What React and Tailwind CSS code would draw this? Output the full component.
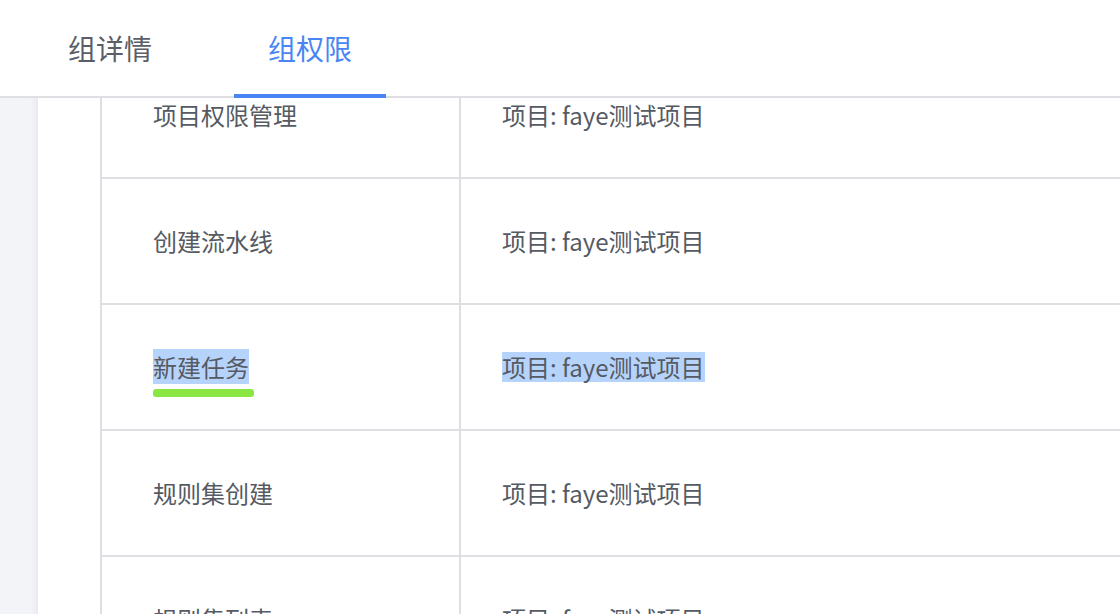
import React from 'react';

const rows = [
  { name: '项目权限管理', scope: '项目: faye测试项目' },
  { name: '创建流水线', scope: '项目: faye测试项目' },
  { name: '新建任务', scope: '项目: faye测试项目', selected: true },
  { name: '规则集创建', scope: '项目: faye测试项目' },
  { name: '规则集列表', scope: '项目: faye测试项目' },
];

const font = { fontFamily: '"Noto Sans CJK SC", "Noto Sans", sans-serif' };

export default function App() {
  return (
    <div className="w-[1120px] h-[614px] overflow-hidden bg-white flex flex-col" style={font}>
      {/* Tabs */}
      <div className="h-[98px] shrink-0 border-b-2 border-[#dfdfe3] flex items-stretch pl-[34px] gap-[48px]">
        <div className="relative px-[34px] flex items-center text-[28px] text-[#5b5e66]">组详情</div>
        <div className="relative px-[34px] flex items-center text-[28px] text-[#4a86f3]">
          组权限
          <div className="absolute left-0 right-0 bottom-[-2px] h-[4px] bg-[#4a86f3]"></div>
        </div>
      </div>

      {/* Body */}
      <div className="flex-1 flex overflow-hidden">
        <div className="w-[38px] shrink-0 bg-[#f3f4f8] shadow-[inset_-6px_0_6px_-4px_rgba(0,0,0,0.06)]"></div>
        <div className="flex-1 pl-[62px] overflow-hidden">
          <div className="-mt-[45px] border-l-2 border-[#dfdfe3]">
            {rows.map((row) => (
              <div key={row.name} className="flex h-[126px] border-b-2 border-[#dfdfe3]">
                <div className="w-[359px] shrink-0 border-r-2 border-[#dfdfe3] pl-[51px] flex items-center">
                  <span className="relative inline-block text-[24px] leading-[30px] text-[#555a63]">
                    <span className={row.selected ? 'bg-[#b6d4fb]' : ''}>{row.name}</span>
                    {row.selected && (
                      <span className="absolute left-0 top-[37px] w-[101px] h-[8px] rounded-[3px] bg-[#8ae642]"></span>
                    )}
                  </span>
                </div>
                <div className="flex-1 pl-[41px] flex items-center">
                  <span className={`inline-block text-[24px] leading-[30px] text-[#555a63] whitespace-nowrap ${row.selected ? 'bg-[#b6d4fb]' : ''}`}>
                    {row.scope}
                  </span>
                </div>
              </div>
            ))}
          </div>
        </div>
      </div>
    </div>
  );
}
